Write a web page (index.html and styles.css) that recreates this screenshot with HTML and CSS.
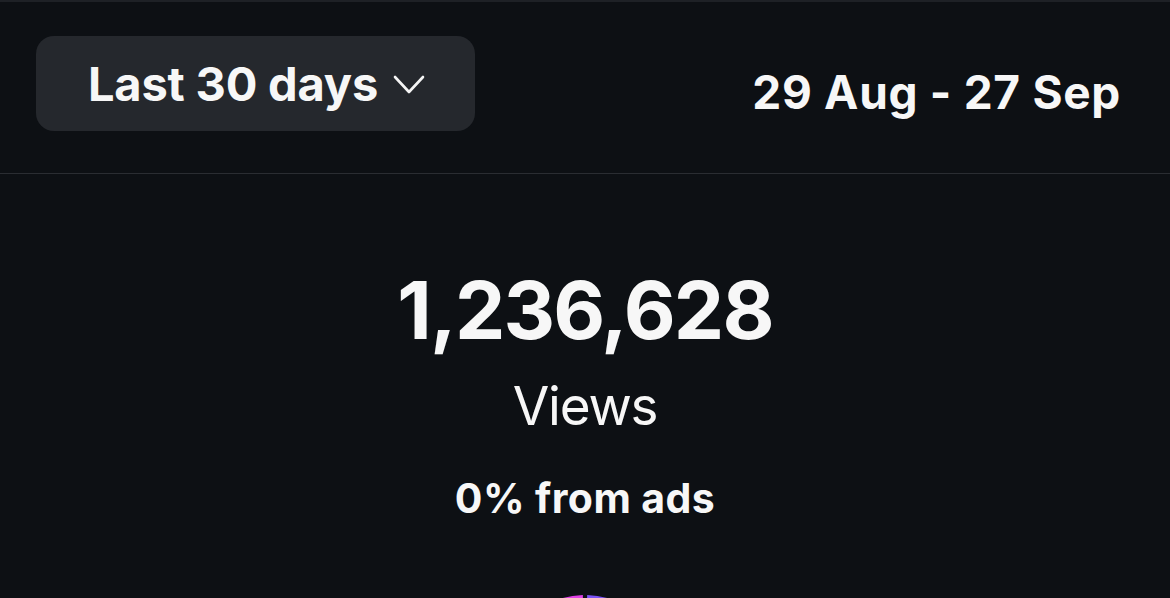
FILE: index.html
```html
<!DOCTYPE html>
<html lang="en">
<head>
<meta charset="utf-8">
<link rel="stylesheet" href="styles.css">
</head>
<body>
<div class="page">
  <header class="header">
    <button class="range">
      <span class="range-label">Last 30 days</span>
      <svg class="chev" width="32" height="22" viewBox="0 0 32 22"><path d="M2 3 L16 18 L30 3" fill="none" stroke="#f5f5f5" stroke-width="2.6" stroke-linecap="round" stroke-linejoin="round"/></svg>
    </button>
    <div class="dates">29 Aug - 27 Sep</div>
  </header>
  <main class="summary">
    <div class="total">1,236,628</div>
    <div class="label">Views</div>
    <div class="ads">0% from ads</div>
    <div class="chart">
      <svg width="160" height="160" viewBox="0 0 160 160">
        <path d="M78 8 A72 72 0 0 0 8 80" fill="none" stroke="#e040e6" stroke-width="12"/>
        <path d="M82 8 A72 72 0 0 1 152 80" fill="none" stroke="#7b52f5" stroke-width="12"/>
      </svg>
    </div>
  </main>
</div>
</body>
</html>
```

FILE: styles.css
```css
html, body {
  margin: 0;
  padding: 0;
  background: #0d1014;
  height: 598px;
  overflow: hidden;
}
.page {
  border-top: 2px solid #1e2126;
  font-family: Inter, "Noto Sans", sans-serif;
  color: #f7f7f7;
}
.header {
  height: 172px;
  border-bottom: 1px solid #2a2d32;
  display: flex;
  justify-content: space-between;
  align-items: flex-start;
  padding: 34px 49px 0 36px;
  box-sizing: border-box;
}
.range {
  width: 439px;
  height: 95px;
  background: #25282d;
  border: none;
  border-radius: 18px;
  display: flex;
  align-items: center;
  justify-content: center;
  gap: 15px;
  padding: 0 0 0 2px;
  color: #f7f7f7;
  font-family: inherit;
  cursor: pointer;
}
.range-label {
  font-size: 47px;
  font-weight: 700;
  letter-spacing: -0.2px;
}
.chev {
  display: block;
  margin-top: 2px;
}
.dates {
  font-size: 46px;
  font-weight: 700;
  margin-top: 28px;
  letter-spacing: 0.7px;
}
.summary {
  display: flex;
  flex-direction: column;
  align-items: center;
  padding-top: 96px;
}
.total {
  font-size: 80px;
  font-weight: 700;
  line-height: 1;
  letter-spacing: -1.8px;
}
.label {
  font-size: 53px;
  font-weight: 400;
  line-height: 1;
  margin-top: 30px;
  letter-spacing: -1.2px;
}
.ads {
  font-size: 41px;
  font-weight: 700;
  line-height: 1;
  margin-top: 45px;
  letter-spacing: 0.4px;
}
.chart {
  margin-top: 74px;
}
.chart svg {
  display: block;
}
```
